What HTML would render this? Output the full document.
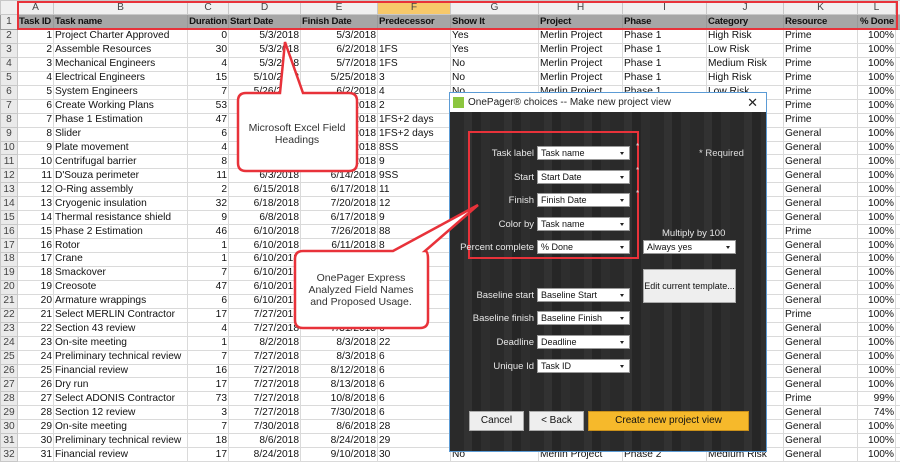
<!DOCTYPE html>
<html><head><meta charset="utf-8"><style>
*{margin:0;padding:0;box-sizing:border-box}
body{width:900px;height:461px;overflow:hidden;background:#fff;font-family:"Liberation Sans",sans-serif;position:relative}
table{position:absolute;left:0;top:0;width:900px;border-collapse:collapse;table-layout:fixed;font-size:10.2px;color:#111}
td{height:13.95px;border:1px solid #dadada;white-space:nowrap;overflow:hidden;padding:0 1px;line-height:12px}
td.n{background:#eaeaea;color:#444;text-align:center;border-color:#c8c8c8}
tr.h td{background:#f0f0f0;color:#444;text-align:center;height:14px;border-color:#c8c8c8}
tr.h td.f{background:#f7c96a}
tr.b td{background:#a6a6a6;font-weight:bold;height:15px;border-color:#999;font-size:9.6px;letter-spacing:-0.2px}
tr.b td.n{background:#eaeaea;font-weight:normal;font-size:10.2px;letter-spacing:0}
.r{text-align:right}
.dlg{position:absolute;left:449px;top:92px;width:318px;height:360px;border:1px solid #5b9bd5;background:repeating-linear-gradient(90deg,#2a2a2a 0 14px,#323232 14px 22px,#262626 22px 31px,#2e2e2e 31px 40px);}
.tb{position:absolute;left:0;top:0;width:100%;height:19px;background:#fff;font-size:10px;line-height:19px;padding-left:18px;color:#222}
.lbl{position:absolute;color:#e8e8e8;font-size:9.5px;text-align:right;width:110px;white-space:nowrap}
.dd{position:absolute;width:93px;height:14px;background:#fff;border:1px solid #999;font-size:9px;line-height:12px;padding-left:3px;color:#111;white-space:nowrap}
.dd:after{content:"";position:absolute;right:5px;top:5px;border:2.5px solid transparent;border-top:3px solid #222}
.btn{position:absolute;background:#eee;border:1px solid #aaa;font-size:10px;text-align:center;color:#111;white-space:nowrap}
.ast{position:absolute;left:186px;color:#ddd;font-size:8px}
</style></head><body>
<table>
<colgroup><col style="width:17px"><col style="width:36px"><col style="width:134px"><col style="width:41px"><col style="width:72px"><col style="width:77px"><col style="width:73px"><col style="width:88px"><col style="width:84px"><col style="width:84px"><col style="width:77px"><col style="width:74px"><col style="width:38px"><col style="width:5px"></colgroup>
<tr class="h"><td></td><td>A</td><td>B</td><td>C</td><td>D</td><td>E</td><td class="f">F</td><td>G</td><td>H</td><td>I</td><td>J</td><td>K</td><td>L</td><td></td></tr>
<tr class="b"><td class="n">1</td><td>Task ID</td><td>Task name</td><td class="r">Duration</td><td>Start Date</td><td>Finish Date</td><td>Predecessor</td><td>Show It</td><td>Project</td><td>Phase</td><td>Category</td><td>Resource</td><td class="r">% Done</td><td></td></tr>
<tr><td class="n">2</td><td class="r">1</td><td>Project Charter Approved</td><td class="r">0</td><td class="r">5/3/2018</td><td class="r">5/3/2018</td><td></td><td>Yes</td><td>Merlin Project</td><td>Phase 1</td><td>High Risk</td><td>Prime</td><td class="r">100%</td><td></td></tr>
<tr><td class="n">3</td><td class="r">2</td><td>Assemble Resources</td><td class="r">30</td><td class="r">5/3/2018</td><td class="r">6/2/2018</td><td>1FS</td><td>Yes</td><td>Merlin Project</td><td>Phase 1</td><td>Low Risk</td><td>Prime</td><td class="r">100%</td><td></td></tr>
<tr><td class="n">4</td><td class="r">3</td><td>Mechanical Engineers</td><td class="r">4</td><td class="r">5/3/2018</td><td class="r">5/7/2018</td><td>1FS</td><td>No</td><td>Merlin Project</td><td>Phase 1</td><td>Medium Risk</td><td>Prime</td><td class="r">100%</td><td></td></tr>
<tr><td class="n">5</td><td class="r">4</td><td>Electrical Engineers</td><td class="r">15</td><td class="r">5/10/2018</td><td class="r">5/25/2018</td><td>3</td><td>No</td><td>Merlin Project</td><td>Phase 1</td><td>High Risk</td><td>Prime</td><td class="r">100%</td><td></td></tr>
<tr><td class="n">6</td><td class="r">5</td><td>System Engineers</td><td class="r">7</td><td class="r">5/26/2018</td><td class="r">6/2/2018</td><td>4</td><td>No</td><td>Merlin Project</td><td>Phase 1</td><td>Low Risk</td><td>Prime</td><td class="r">100%</td><td></td></tr>
<tr><td class="n">7</td><td class="r">6</td><td>Create Working Plans</td><td class="r">53</td><td class="r">5/3/2018</td><td class="r">6/2/2018</td><td>2</td><td></td><td></td><td></td><td></td><td>Prime</td><td class="r">100%</td><td></td></tr>
<tr><td class="n">8</td><td class="r">7</td><td>Phase 1 Estimation</td><td class="r">47</td><td class="r">5/3/2018</td><td class="r">6/2/2018</td><td>1FS+2 days</td><td></td><td></td><td></td><td></td><td>Prime</td><td class="r">100%</td><td></td></tr>
<tr><td class="n">9</td><td class="r">8</td><td>Slider</td><td class="r">6</td><td class="r">5/3/2018</td><td class="r">6/2/2018</td><td>1FS+2 days</td><td></td><td></td><td></td><td></td><td>General</td><td class="r">100%</td><td></td></tr>
<tr><td class="n">10</td><td class="r">9</td><td>Plate movement</td><td class="r">4</td><td class="r">5/3/2018</td><td class="r">6/2/2018</td><td>8SS</td><td></td><td></td><td></td><td></td><td>General</td><td class="r">100%</td><td></td></tr>
<tr><td class="n">11</td><td class="r">10</td><td>Centrifugal barrier</td><td class="r">8</td><td class="r">5/3/2018</td><td class="r">6/2/2018</td><td>9</td><td></td><td></td><td></td><td></td><td>General</td><td class="r">100%</td><td></td></tr>
<tr><td class="n">12</td><td class="r">11</td><td>D'Souza perimeter</td><td class="r">11</td><td class="r">6/3/2018</td><td class="r">6/14/2018</td><td>9SS</td><td></td><td></td><td></td><td></td><td>General</td><td class="r">100%</td><td></td></tr>
<tr><td class="n">13</td><td class="r">12</td><td>O-Ring assembly</td><td class="r">2</td><td class="r">6/15/2018</td><td class="r">6/17/2018</td><td>11</td><td></td><td></td><td></td><td></td><td>General</td><td class="r">100%</td><td></td></tr>
<tr><td class="n">14</td><td class="r">13</td><td>Cryogenic insulation</td><td class="r">32</td><td class="r">6/18/2018</td><td class="r">7/20/2018</td><td>12</td><td></td><td></td><td></td><td></td><td>General</td><td class="r">100%</td><td></td></tr>
<tr><td class="n">15</td><td class="r">14</td><td>Thermal resistance shield</td><td class="r">9</td><td class="r">6/8/2018</td><td class="r">6/17/2018</td><td>9</td><td></td><td></td><td></td><td></td><td>General</td><td class="r">100%</td><td></td></tr>
<tr><td class="n">16</td><td class="r">15</td><td>Phase 2 Estimation</td><td class="r">46</td><td class="r">6/10/2018</td><td class="r">7/26/2018</td><td>88</td><td></td><td></td><td></td><td></td><td>Prime</td><td class="r">100%</td><td></td></tr>
<tr><td class="n">17</td><td class="r">16</td><td>Rotor</td><td class="r">1</td><td class="r">6/10/2018</td><td class="r">6/11/2018</td><td>8</td><td></td><td></td><td></td><td></td><td>General</td><td class="r">100%</td><td></td></tr>
<tr><td class="n">18</td><td class="r">17</td><td>Crane</td><td class="r">1</td><td class="r">6/10/2018</td><td class="r">6/11/2018</td><td>8</td><td></td><td></td><td></td><td></td><td>General</td><td class="r">100%</td><td></td></tr>
<tr><td class="n">19</td><td class="r">18</td><td>Smackover</td><td class="r">7</td><td class="r">6/10/2018</td><td class="r">6/17/2018</td><td>8</td><td></td><td></td><td></td><td></td><td>General</td><td class="r">100%</td><td></td></tr>
<tr><td class="n">20</td><td class="r">19</td><td>Creosote</td><td class="r">47</td><td class="r">6/10/2018</td><td class="r">7/27/2018</td><td>8</td><td></td><td></td><td></td><td></td><td>General</td><td class="r">100%</td><td></td></tr>
<tr><td class="n">21</td><td class="r">20</td><td>Armature wrappings</td><td class="r">6</td><td class="r">6/10/2018</td><td class="r">6/16/2018</td><td>8</td><td></td><td></td><td></td><td></td><td>General</td><td class="r">100%</td><td></td></tr>
<tr><td class="n">22</td><td class="r">21</td><td>Select MERLIN Contractor</td><td class="r">17</td><td class="r">7/27/2018</td><td class="r">8/13/2018</td><td>6</td><td></td><td></td><td></td><td></td><td>Prime</td><td class="r">100%</td><td></td></tr>
<tr><td class="n">23</td><td class="r">22</td><td>Section 43 review</td><td class="r">4</td><td class="r">7/27/2018</td><td class="r">7/31/2018</td><td>6</td><td></td><td></td><td></td><td></td><td>General</td><td class="r">100%</td><td></td></tr>
<tr><td class="n">24</td><td class="r">23</td><td>On-site meeting</td><td class="r">1</td><td class="r">8/2/2018</td><td class="r">8/3/2018</td><td>22</td><td></td><td></td><td></td><td></td><td>General</td><td class="r">100%</td><td></td></tr>
<tr><td class="n">25</td><td class="r">24</td><td>Preliminary technical review</td><td class="r">7</td><td class="r">7/27/2018</td><td class="r">8/3/2018</td><td>6</td><td></td><td></td><td></td><td></td><td>General</td><td class="r">100%</td><td></td></tr>
<tr><td class="n">26</td><td class="r">25</td><td>Financial review</td><td class="r">16</td><td class="r">7/27/2018</td><td class="r">8/12/2018</td><td>6</td><td></td><td></td><td></td><td></td><td>General</td><td class="r">100%</td><td></td></tr>
<tr><td class="n">27</td><td class="r">26</td><td>Dry run</td><td class="r">17</td><td class="r">7/27/2018</td><td class="r">8/13/2018</td><td>6</td><td></td><td></td><td></td><td></td><td>General</td><td class="r">100%</td><td></td></tr>
<tr><td class="n">28</td><td class="r">27</td><td>Select ADONIS Contractor</td><td class="r">73</td><td class="r">7/27/2018</td><td class="r">10/8/2018</td><td>6</td><td></td><td></td><td></td><td></td><td>Prime</td><td class="r">99%</td><td></td></tr>
<tr><td class="n">29</td><td class="r">28</td><td>Section 12 review</td><td class="r">3</td><td class="r">7/27/2018</td><td class="r">7/30/2018</td><td>6</td><td></td><td></td><td></td><td></td><td>General</td><td class="r">74%</td><td></td></tr>
<tr><td class="n">30</td><td class="r">29</td><td>On-site meeting</td><td class="r">7</td><td class="r">7/30/2018</td><td class="r">8/6/2018</td><td>28</td><td></td><td></td><td></td><td></td><td>General</td><td class="r">100%</td><td></td></tr>
<tr><td class="n">31</td><td class="r">30</td><td>Preliminary technical review</td><td class="r">18</td><td class="r">8/6/2018</td><td class="r">8/24/2018</td><td>29</td><td></td><td></td><td></td><td></td><td>General</td><td class="r">100%</td><td></td></tr>
<tr><td class="n">32</td><td class="r">31</td><td>Financial review</td><td class="r">17</td><td class="r">8/24/2018</td><td class="r">9/10/2018</td><td>30</td><td>No</td><td>Merlin Project</td><td>Phase 2</td><td>Medium Risk</td><td>General</td><td class="r">100%</td><td></td></tr>
</table>
<div style="position:absolute;left:17px;top:1px;width:881px;height:29px;border:2px solid #e8323a"></div>

<div class="dlg">
 <div class="tb"><span style="position:absolute;left:3px;top:4px;width:11px;height:11px;background:#8cc63f"></span>OnePager® choices -- Make new project view<span style="position:absolute;right:8px;top:0;font-size:13px">✕</span></div>
 <div style="position:absolute;left:18px;top:38px;width:171px;height:128px;border:2px solid #e8323a"></div>
 <div class="lbl" style="left:-26px;top:55px">Task label</div><div class="dd" style="left:87px;top:53px">Task name</div>
 <div class="lbl" style="left:-26px;top:79px">Start</div><div class="dd" style="left:87px;top:77px">Start Date</div>
 <div class="lbl" style="left:-26px;top:102px">Finish</div><div class="dd" style="left:87px;top:100px">Finish Date</div>
 <div class="lbl" style="left:-26px;top:126px">Color by</div><div class="dd" style="left:87px;top:124px">Task name</div>
 <div class="lbl" style="left:-26px;top:149px">Percent complete</div><div class="dd" style="left:87px;top:147px">% Done</div>
 <div class="ast" style="top:49px">*</div><div class="ast" style="top:73px">*</div><div class="ast" style="top:96px">*</div>
 <div class="lbl" style="left:249px;top:55px;width:auto;color:#ddd;text-align:left">* Required</div>
 <div class="lbl" style="left:212px;top:135px;width:auto;text-align:left">Multiply by 100</div>
 <div class="dd" style="left:193px;top:147px">Always yes</div>
 <div class="btn" style="left:193px;top:176px;width:93px;height:34px;line-height:32px;font-size:9px">Edit current template...</div>
 <div class="lbl" style="left:-26px;top:197px">Baseline start</div><div class="dd" style="left:87px;top:195px">Baseline Start</div>
 <div class="lbl" style="left:-26px;top:220px">Baseline finish</div><div class="dd" style="left:87px;top:218px">Baseline Finish</div>
 <div class="lbl" style="left:-26px;top:244px">Deadline</div><div class="dd" style="left:87px;top:242px">Deadline</div>
 <div class="lbl" style="left:-26px;top:268px">Unique Id</div><div class="dd" style="left:87px;top:266px">Task ID</div>
 <div class="btn" style="left:19px;top:318px;width:55px;height:20px;line-height:18px">Cancel</div>
 <div class="btn" style="left:79px;top:318px;width:55px;height:20px;line-height:18px">&lt; Back</div>
 <div class="btn" style="left:138px;top:318px;width:161px;height:20px;line-height:18px;background:#f6b92b;border-color:#c9901a">Create new project view</div>
</div>

<svg style="position:absolute;left:0;top:0" width="900" height="461">
 <path d="M246 93 H280 L285 42 L303 93 H349 Q357 93 357 101 V163 Q357 171 349 171 H246 Q238 171 238 163 V101 Q238 93 246 93 Z" fill="#fff" stroke="#e8323a" stroke-width="2.5"/>
 <path d="M303 251 H393 L478 205 L425 251 Q428 251 428 259 V320 Q428 328 420 328 H303 Q295 328 295 320 V259 Q295 251 303 251 Z" fill="#fff" stroke="#e8323a" stroke-width="2.5"/>
 <g font-family="Liberation Sans, sans-serif" font-size="10.5" fill="#333" text-anchor="middle">
  <text x="297" y="131">Microsoft Excel Field</text><text x="297" y="143">Headings</text>
  <text x="361" y="281">OnePager Express</text><text x="361" y="293">Analyzed Field Names</text><text x="361" y="305">and Proposed Usage.</text>
 </g>
</svg>
</body></html>
